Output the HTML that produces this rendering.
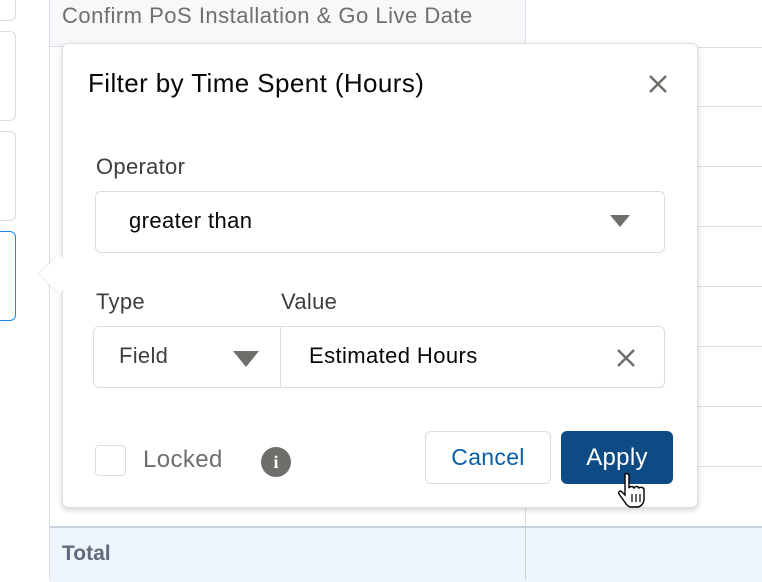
<!DOCTYPE html>
<html><head><style>
body{margin:0;width:762px;height:580px;overflow:hidden;background:#fff;font-family:"Liberation Sans",sans-serif;position:relative}
.a{position:absolute;white-space:nowrap}
.card{position:absolute;left:-10px;width:24px;border:1px solid #d8dde6;border-radius:6px;background:#fff}
.row{position:absolute;left:525px;right:0;height:0;border-top:1px solid #d8dde6}
</style></head><body>
<div class="card" style="top:-10px;height:29px"></div>
<div class="card" style="top:31px;height:88px"></div>
<div class="card" style="top:131px;height:88px"></div>
<div class="card" style="top:231px;height:88px;border-color:#1589ee"></div>
<div class="a" style="left:49px;top:0;width:1px;height:580px;background:#d8dde6"></div>
<div class="a" style="left:50px;top:0;width:475px;height:46px;background:#f7f8fa;border-bottom:1px solid #d8dde6"></div>
<div class="a" style="left:525px;top:0;width:1px;height:580px;background:#d8dde6"></div>
<div class="a" style="left:62px;top:3px;font-size:22px;letter-spacing:0.5px;color:#706e6b">Confirm PoS Installation &amp; Go Live Date</div>
<div class="row" style="top:47px"></div><div class="row" style="top:106px"></div><div class="row" style="top:166px"></div><div class="row" style="top:226px"></div><div class="row" style="top:286px"></div><div class="row" style="top:346px"></div><div class="row" style="top:406px"></div><div class="row" style="top:466px"></div>
<div class="a" style="left:50px;top:526px;width:712px;height:54px;background:#eef4fb;border-top:2px solid #c9d1dd"></div>
<div class="a" style="left:525px;top:526px;width:1px;height:54px;background:#c9d1dd"></div>
<div class="a" style="left:62px;top:542px;font-size:21px;font-weight:bold;color:#5f6b7a">Total</div>
<div class="a" style="left:62px;top:43px;width:636px;height:465px;background:#fff;border:1px solid #dde1e6;border-radius:6px;box-shadow:0 2px 6px rgba(0,0,0,.18);box-sizing:border-box"></div>
<div class="a" style="left:45px;top:260px;width:28px;height:28px;background:#fff;transform:rotate(45deg);box-shadow:-1px 1px 2px rgba(0,0,0,.08)"></div>
<div class="a" style="left:63px;top:250px;width:20px;height:50px;background:#fff"></div>
<div class="a" style="left:88px;top:68px;font-size:26px;letter-spacing:0.4px;color:#080707">Filter by Time Spent (Hours)</div>
<svg class="a" style="left:647px;top:73px" width="22" height="22"><path d="M3 3L19 19M19 3L3 19" stroke="#706e6b" stroke-width="2.5"/></svg>
<div class="a" style="left:96px;top:154px;font-size:22px;letter-spacing:0.3px;color:#3e3e3c">Operator</div>
<div class="a" style="left:95px;top:191px;width:570px;height:62px;border:1px solid #d8dde6;border-radius:6px;box-sizing:border-box"></div>
<div class="a" style="left:129px;top:208px;font-size:22px;letter-spacing:0.4px;color:#080707">greater than</div>
<svg class="a" style="left:610px;top:215px" width="20" height="12"><path d="M0 0H20L10 12Z" fill="#706e6b"/></svg>
<div class="a" style="left:96px;top:289px;font-size:22px;letter-spacing:0.3px;color:#3e3e3c">Type</div>
<div class="a" style="left:281px;top:289px;font-size:22px;letter-spacing:0.3px;color:#3e3e3c">Value</div>
<div class="a" style="left:93px;top:326px;width:572px;height:62px;border:1px solid #d8dde6;border-radius:6px;box-sizing:border-box"></div>
<div class="a" style="left:280px;top:327px;width:1px;height:60px;background:#d8dde6"></div>
<div class="a" style="left:119px;top:343px;font-size:22px;letter-spacing:0.3px;color:#3e3e3c">Field</div>
<svg class="a" style="left:233px;top:351px" width="26" height="16"><path d="M0 0H26L13 16Z" fill="#706e6b"/></svg>
<div class="a" style="left:309px;top:343px;font-size:22px;letter-spacing:0.4px;color:#080707">Estimated Hours</div>
<svg class="a" style="left:616px;top:348px" width="20" height="20"><path d="M2 2L18 18M18 2L2 18" stroke="#706e6b" stroke-width="2.5"/></svg>
<div class="a" style="left:95px;top:445px;width:31px;height:31px;border:1px solid #d8dde6;border-radius:4px;box-sizing:border-box"></div>
<div class="a" style="left:143px;top:446px;font-size:24px;letter-spacing:0.4px;color:#706e6b">Locked</div>
<div class="a" style="left:261px;top:447px;width:30px;height:30px;border-radius:50%;background:#706e6b;color:#fff;font-size:18px;font-weight:bold;text-align:center;line-height:30px;font-family:'Liberation Serif',serif">i</div>
<div class="a" style="left:425px;top:431px;width:126px;height:53px;border:1px solid #d8dde6;border-radius:6px;box-sizing:border-box;color:#0a5ea8;font-size:23px;letter-spacing:0.3px;text-align:center;line-height:51px">Cancel</div>
<div class="a" style="left:561px;top:431px;width:112px;height:53px;background:#0d4b85;border-radius:6px;color:#fff;font-size:24px;letter-spacing:0.3px;text-align:center;line-height:53px">Apply</div>
<svg class="a" style="left:617px;top:472px" width="34" height="38"><path d="M8 2c2-1 4 0 4 2v12c1-2 4-2 5 0c1-2 4-2 5 0c1-1 4-1 5 1v10c0 4-3 8-7 8h-6c-3 0-5-3-7-6l-5-7c-1-2 1-4 3-2l3 3V4z" fill="#fff" stroke="#000" stroke-width="1.4"/><path d="M15 22v8M19 22v8M23 22v8" stroke="#000" stroke-width="1.2"/></svg>
</body></html>
